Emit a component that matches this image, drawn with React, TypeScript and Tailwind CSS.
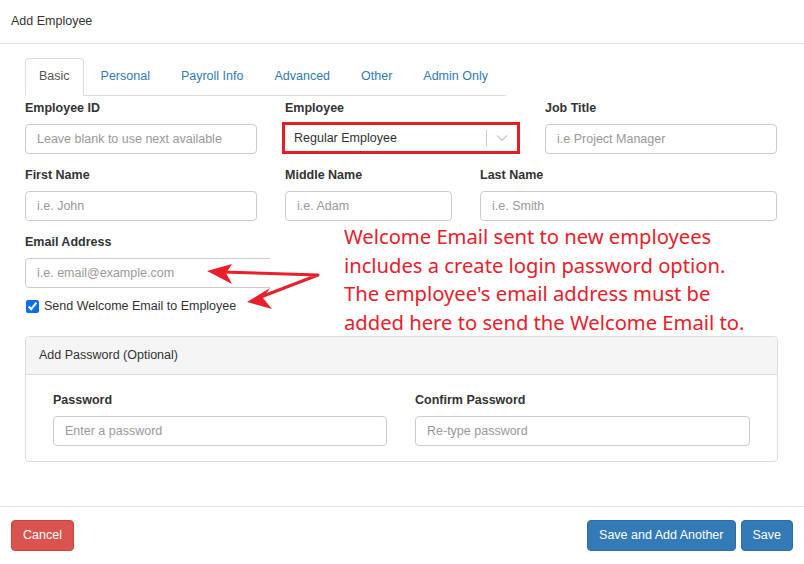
import React from "react";

const inputCls =
  "h-[30px] w-full rounded-[4px] border border-[#ccc] bg-white px-[11px] text-[12.5px] text-[#333] placeholder:text-[#999] outline-none";
const labelCls = "block text-[12.5px] font-bold leading-[18px] text-[#333] mb-[7px]";

function Field({ label, placeholder, width }: { label: string; placeholder: string; width: string }) {
  return (
    <div className={width}>
      <label className={labelCls}>{label}</label>
      <input className={inputCls} placeholder={placeholder} type="text" />
    </div>
  );
}

const tabs = ["Basic", "Personal", "Payroll Info", "Advanced", "Other", "Admin Only"];

export default function App() {
  return (
    <div
      className="relative flex h-[564px] w-[804px] flex-col overflow-hidden bg-white text-[#333]"
      style={{ fontFamily: '"Liberation Sans", Arial, sans-serif' }}
    >
      <div className="flex h-[44px] items-center border-b border-[#e5e5e5] px-[11px] text-[12.5px]">Add Employee</div>

      <div className="flex-1 px-[25px] pt-[14px]">
        <ul className="flex h-[38px] w-[481px] whitespace-nowrap border-b border-[#ddd]">
          {tabs.map((t, i) => (
            <li
              key={t}
              className={
                i === 0
                  ? "-mb-px mr-[2px] flex items-center rounded-t-[4px] border border-[#ddd] border-b-white bg-white px-[13px] pb-[1px] text-[12.5px] text-[#555]"
                  : "mr-[1px] flex items-center px-[15px] text-[12.5px] text-[#337ab7]"
              }
            >
              {t}
            </li>
          ))}
        </ul>

        <div className="mt-[3px] flex gap-[28px]">
          <Field label="Employee ID" placeholder="Leave blank to use next available" width="w-[232px]" />
          <div className="w-[232px]">
            <label className={labelCls}>Employee</label>
            <div className="-mx-[3px] -my-[2px] border-[3px] border-[#e31e24]">
              <div className="flex h-[26px] items-center bg-white pl-[9px] text-[12.5px] text-[#333]">
                <span className="flex-1">Regular Employee</span>
                <span className="h-[16px] w-px bg-[#ccc]" />
                <svg className="mx-[9px]" width="12" height="8" viewBox="0 0 12 8" fill="none">
                  <path d="M1 1.5 6 6.5 11 1.5" stroke="#ccc" strokeWidth="1.4" />
                </svg>
              </div>
            </div>
          </div>
          <Field label="Job Title" placeholder="i.e Project Manager" width="w-[232px]" />
        </div>

        <div className="mt-[12px] flex gap-[28px]">
          <Field label="First Name" placeholder="i.e. John" width="w-[232px]" />
          <Field label="Middle Name" placeholder="i.e. Adam" width="w-[167px]" />
          <Field label="Last Name" placeholder="i.e. Smith" width="w-[297px]" />
        </div>

        <div className="mt-[12px] w-[300px]">
          <label className={labelCls}>Email Address</label>
          <input className={inputCls} placeholder="i.e. email@example.com" type="text" />
          <label className="mt-[9px] flex items-center gap-[5px] text-[12.5px] text-[#333]">
            <input type="checkbox" defaultChecked className="ml-[1px] h-[13px] w-[13px] accent-[#0b6ee8]" />
            Send Welcome Email to Employee
          </label>
        </div>

        <div className="mt-[20px] w-[753px] rounded-[4px] border border-[#ddd]">
          <div className="flex h-[38px] items-center rounded-t-[4px] border-b border-[#ddd] bg-[#f5f5f5] px-[13px] text-[12.5px]">
            Add Password (Optional)
          </div>
          <div className="flex gap-[28px] px-[27px] pb-[15px] pt-[16px]">
            <Field label="Password" placeholder="Enter a password" width="w-[334px]" />
            <Field label="Confirm Password" placeholder="Re-type password" width="w-[335px]" />
          </div>
        </div>
      </div>

      <div className="flex h-[58px] items-center justify-between border-t border-[#e5e5e5] px-[11px]">
        <button className="h-[31px] rounded-[4px] border border-[#d43f3a] bg-[#d9534f] px-[11px] text-[12.5px] text-white">
          Cancel
        </button>
        <div className="flex gap-[5px]">
          <button className="h-[31px] rounded-[4px] border border-[#2e6da4] bg-[#337ab7] px-[11px] text-[12.5px] text-white">
            Save and Add Another
          </button>
          <button className="h-[31px] rounded-[4px] border border-[#2e6da4] bg-[#337ab7] px-[11px] text-[12.5px] text-white">
            Save
          </button>
        </div>
      </div>

      {/* annotation overlay */}
      <div
        className="absolute left-[270px] top-[222px] h-[112px] w-[510px] bg-white pl-[74px] text-[20.2px] leading-[28.6px] text-[#e8202a]"
        style={{ fontFamily: '"Noto Sans", "Open Sans", sans-serif' }}
      >
        <div>Welcome Email sent to new employees</div>
        <div>includes a create login password option.</div>
        <div>The employee's email address must be</div>
        <div>added here to send the Welcome Email to.</div>
      </div>
      <svg className="absolute left-0 top-0" width="804" height="564" viewBox="0 0 804 564" fill="none">
        <path d="M222 272 L318 275 L258 298" stroke="#e8202a" strokeWidth="3" strokeLinejoin="round" />
        <path d="M207 271 L232 264 L226 273 L232 284 Z" fill="#e8202a" />
        <path d="M247 302 L270 288 L263 298 L272 309 Z" fill="#e8202a" />
      </svg>
    </div>
  );
}
